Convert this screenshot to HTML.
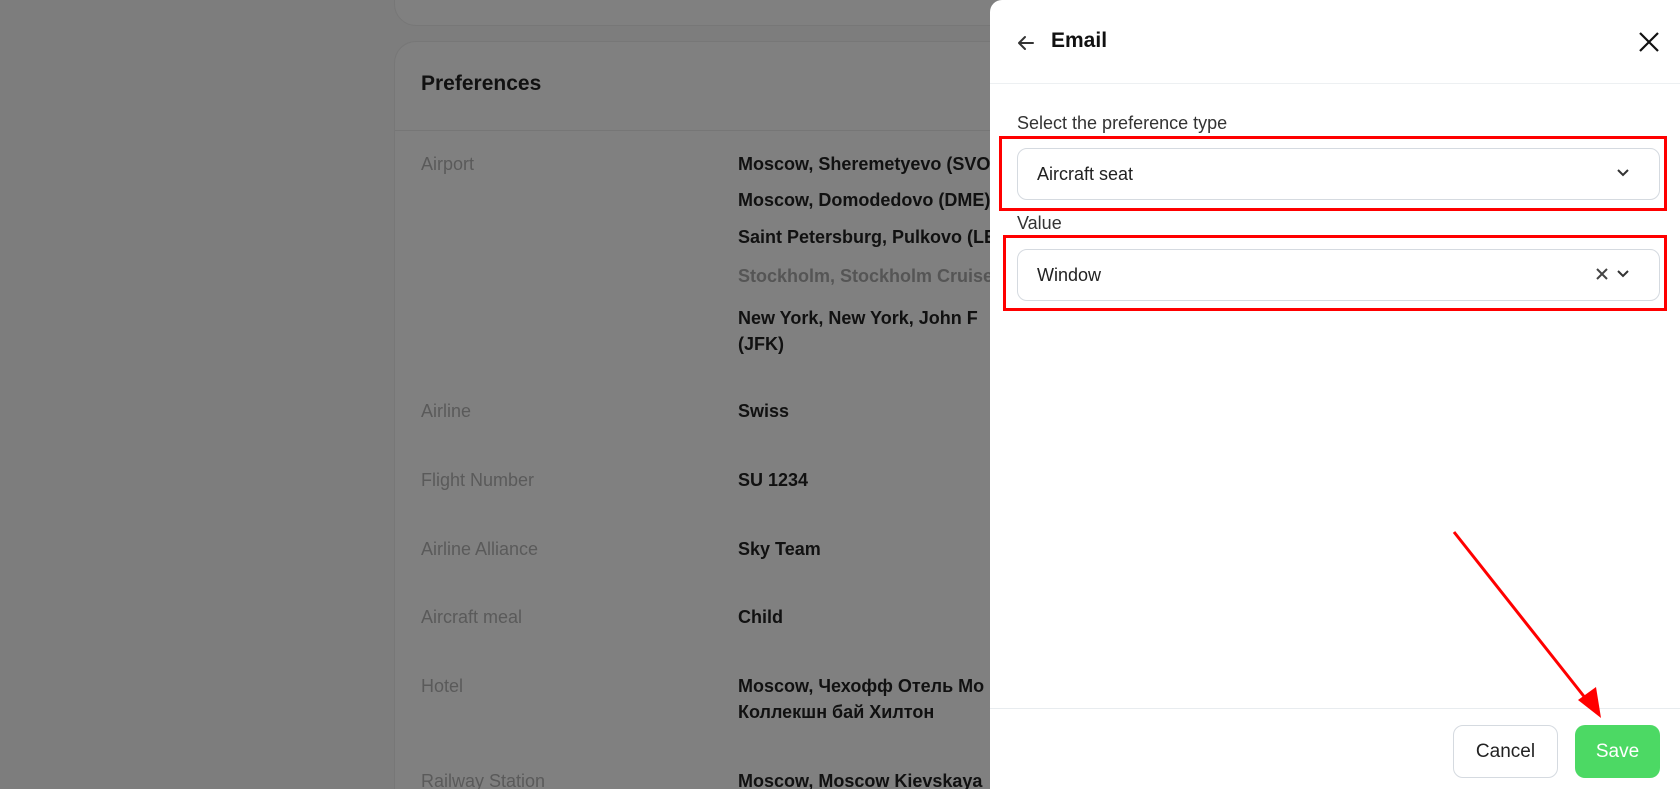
<!DOCTYPE html>
<html style="overflow:hidden;height:789px"><head><meta charset="utf-8"><style>
*{margin:0;padding:0;box-sizing:border-box}
html,body{width:1680px;height:789px;overflow:hidden}
body{background:#7d7d7d;font-family:"Liberation Sans","Noto Sans CJK SC",sans-serif;position:relative}
.a{position:absolute;white-space:nowrap}
.card{position:absolute;background:#808080;border:1px solid #777;border-radius:22px}
.lab{position:absolute;left:421px;color:#5a5a5a;font-size:18px}
.val{position:absolute;left:738px;color:#111;font-size:18px;font-weight:bold;white-space:nowrap}
.panel{position:absolute;left:990px;top:0;width:690px;height:789px;background:#fff;border-radius:12px 0 0 0}
.sel{position:absolute;left:27px;width:643px;height:52px;border:1px solid #d5dae0;border-radius:10px;font-size:18px;color:#222;padding:0 0 0 19px;line-height:50px}
.red{position:absolute;border:3px solid #f00}
</style></head><body>
<div class="card" style="left:394px;top:-30px;width:700px;height:56px"></div>
<div class="card" style="left:394px;top:41px;width:700px;height:748px;border-bottom:none;border-radius:22px 22px 0 0"></div>
<div class="a" style="left:421px;top:72px;font-size:21px;font-weight:bold;color:#111">Preferences</div>
<div class="a" style="left:395px;top:130px;width:600px;height:1px;background:#767676"></div>
<div class="lab" style="top:154px">Airport</div>
<div class="val" style="top:154px">Moscow, Sheremetyevo (SVO)</div>
<div class="val" style="top:190px">Moscow, Domodedovo (DME)</div>
<div class="val" style="top:227px">Saint Petersburg, Pulkovo (LED)</div>
<div class="val" style="top:266px;color:#555">Stockholm, Stockholm Cruise</div>
<div class="val" style="top:308px">New York, New York, John F</div>
<div class="val" style="top:334px">(JFK)</div>
<div class="lab" style="top:401px">Airline</div><div class="val" style="top:401px">Swiss</div>
<div class="lab" style="top:470px">Flight Number</div><div class="val" style="top:470px">SU 1234</div>
<div class="lab" style="top:539px">Airline Alliance</div><div class="val" style="top:539px">Sky Team</div>
<div class="lab" style="top:607px">Aircraft meal</div><div class="val" style="top:607px">Child</div>
<div class="lab" style="top:676px">Hotel</div><div class="val" style="top:676px">Moscow, Чехофф Отель Мо</div>
<div class="val" style="top:702px">Коллекшн бай Хилтон</div>
<div class="lab" style="top:771px">Railway Station</div><div class="val" style="top:771px">Moscow, Moscow Kievskaya</div>

<div class="panel">
 <svg class="a" style="left:26px;top:33px" width="20" height="20" viewBox="0 0 20 20"><path d="M17 10H3M9 4L3 10L9 16" stroke="#333" stroke-width="2" fill="none" stroke-linecap="round" stroke-linejoin="round"/></svg>
 <div class="a" style="left:61px;top:29px;font-size:21px;font-weight:bold;color:#111">Email</div>
 <svg class="a" style="left:648px;top:31px" width="22" height="22" viewBox="0 0 22 22"><path d="M2 2L20 20M20 2L2 20" stroke="#111" stroke-width="2.2"/></svg>
 <div class="a" style="left:0;top:83px;width:690px;height:1px;background:#edf0f2"></div>
 <div class="a" style="left:27px;top:113px;font-size:18px;color:#333">Select the preference type</div>
 <div class="sel" style="top:148px">Aircraft seat</div>
 <svg class="a" style="left:626px;top:168px" width="14" height="10" viewBox="0 0 14 10"><path d="M2 2L7 7L12 2" stroke="#333" stroke-width="2" fill="none"/></svg>
 <div class="a" style="left:27px;top:213px;font-size:18px;color:#333">Value</div>
 <div class="sel" style="top:249px">Window</div>
 <svg class="a" style="left:605px;top:267px" width="14" height="14" viewBox="0 0 14 14"><path d="M2 2L12 12M12 2L2 12" stroke="#444" stroke-width="2"/></svg>
 <svg class="a" style="left:626px;top:269px" width="14" height="10" viewBox="0 0 14 10"><path d="M2 2L7 7L12 2" stroke="#333" stroke-width="2" fill="none"/></svg>
 <div class="a" style="left:0;top:708px;width:690px;height:1px;background:#e8ecef"></div>
 <div class="a" style="left:463px;top:725px;width:105px;height:53px;border:1px solid #d5dae0;border-radius:10px;text-align:center;line-height:51px;font-size:19px;color:#222">Cancel</div>
 <div class="a" style="left:585px;top:725px;width:85px;height:53px;background:#4cd964;border-radius:10px;text-align:center;line-height:53px;font-size:19px;color:#fff">Save</div>
</div>
<div class="red" style="left:999px;top:136px;width:668px;height:75px"></div>
<div class="red" style="left:1003px;top:235px;width:664px;height:76px"></div>
<svg class="a" style="left:0;top:0" width="1680" height="789"><line x1="1454" y1="532" x2="1590" y2="704" stroke="#f00" stroke-width="3"/><polygon points="1601,718 1578,700 1596,687" fill="#f00"/></svg>
</body></html>
